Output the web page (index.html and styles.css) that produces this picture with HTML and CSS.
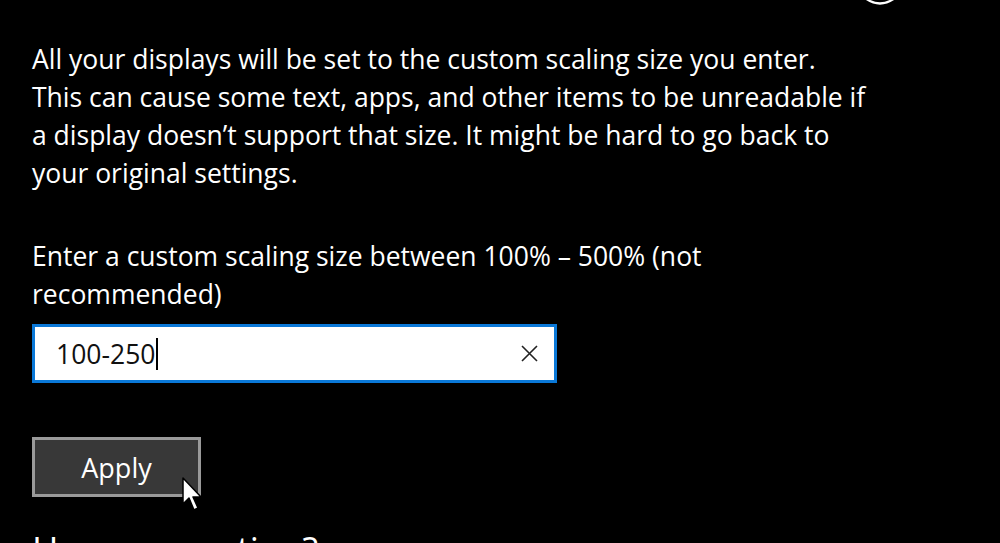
FILE: index.html
```html
<!DOCTYPE html>
<html lang="en">
  <head>
    <meta charset="UTF-8" />
    <meta name="viewport" content="width=device-width, initial-scale=1.0" />
    <title>Custom scaling</title>
    <link rel="stylesheet" href="styles.css">
  </head>
  <body>
    <svg class="title-tail" width="36" height="8" viewBox="0 0 36 8"><path d="M3 0 Q18 11 33 0" fill="none" stroke="#fff" stroke-width="2.2"/></svg>
    <div class="page">
      <p class="warning">All your displays will be set to the custom scaling size you enter.<br>This can cause some text, apps, and other items to be unreadable if a display doesn’t support that size. It might be hard to go back to your original settings.</p>
      <label class="prompt" for="scale">Enter a custom scaling size between 100% – 500% (not recommended)</label>
      <div class="scale-box">
        <span class="scale-value">100-250</span><span class="caret"></span>
        <svg class="clear-btn" width="17" height="17" viewBox="0 0 17 17"><path d="M1 1 L16 16 M16 1 L1 16" stroke="#222" stroke-width="1.6"/></svg>
      </div>
      <div class="apply-row">
        <button class="apply-btn">Apply</button>
        <svg class="pointer" width="22" height="38" viewBox="0 0 22 38">
          <path d="M1 1 L1 27 L7 21 L12 33 L16 31 L11 20 L19 20 Z" fill="#fff" stroke="#000" stroke-width="1.5" stroke-linejoin="round"/>
        </svg>
      </div>
      <h2 class="help-title">Have a question?</h2>
    </div>
  </body>
</html>
```
FILE: styles.css
```css
body{
  margin: 0;
  background-color: #000;
  color: #fff;
  font-family: "Open Sans", "Noto Sans", sans-serif;
  overflow: hidden;
  height: 543px;
  position: relative;
}
.title-tail{
  position: absolute;
  top: -2px;
  left: 862px;
}
.page{
  padding: 40px 0 0 32px;
}
.warning{
  margin: 0;
  font-size: 26.5px;
  line-height: 38px;
  max-width: 845px;
}
.prompt{
  display: block;
  margin-top: 45px;
  font-size: 26.5px;
  line-height: 38px;
  width: 720px;
}
.scale-box{
  margin-top: 11px;
  height: 53px;
  border: 3px solid #0a78d7;
  background-color: #fff;
  color: #111;
  display: flex;
  align-items: center;
  padding-left: 21px;
  width: 498px;
}
.scale-value{
  font-size: 26.5px;
}
.caret{
  width: 2px;
  height: 32px;
  background-color: #000;
  margin-left: 1px;
}
.clear-btn{
  margin-left: auto;
  margin-right: 16px;
}
.apply-row{
  margin-top: 54px;
  position: relative;
  height: 60px;
}
.apply-btn{
  width: 169px;
  height: 60px;
  background-color: #383838;
  border: 3px solid #9a9a9a;
  color: #fff;
  font-family: "Open Sans", "Noto Sans", sans-serif;
  font-size: 27px;
  padding: 0;
}
.pointer{
  position: absolute;
  left: 150px;
  top: 40px;
}
.help-title{
  margin: 28px 0 0 0;
  font-size: 36px;
  font-weight: normal;
}
```
